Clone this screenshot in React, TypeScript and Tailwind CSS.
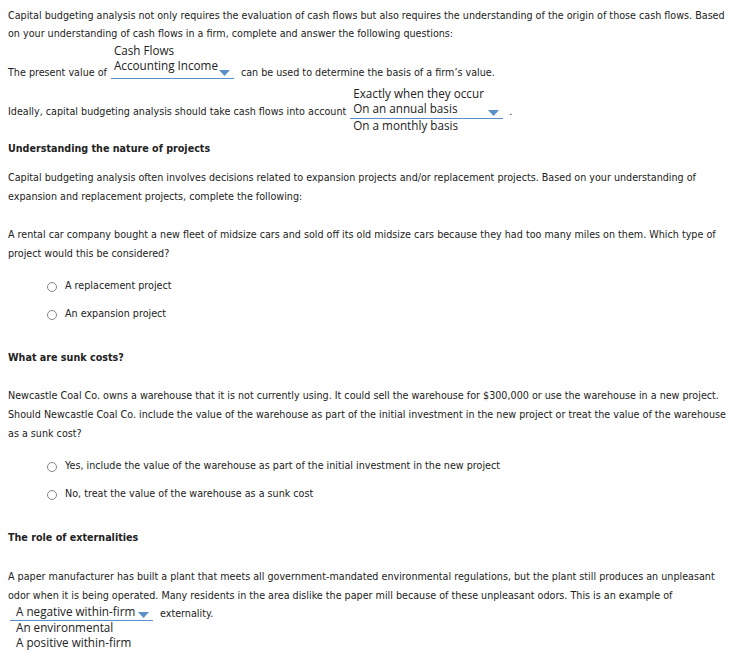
import React from 'react'

const body = "font-['DejaVu_Sans',Verdana,sans-serif] text-[9.6px] text-[#222]"
const opt = "font-['Open_Sans','Noto_Sans',sans-serif] text-[11.7px] text-[#222]"

function Caret() {
  return (
    <svg width="11" height="6" viewBox="0 0 11 6" className="shrink-0">
      <polygon points="0,0 11,0 5.5,6" fill="#5a8fc8" />
    </svg>
  )
}

interface DropdownProps {
  above?: string[]
  selected: string
  below?: string[]
  width: number
  padLeft?: string
  selClass?: string
  belowClass?: string
}

function Dropdown({ above = [], selected, below = [], width, padLeft = 'pl-[3px]', selClass = 'h-[21px]', belowClass = '' }: DropdownProps) {
  return (
    <div className={`flex flex-col ${opt}`} style={{ width }}>
      {above.map(o => (
        <div key={o} className={`h-[15px] leading-[15px] whitespace-nowrap ${padLeft}`}>{o}</div>
      ))}
      <div className={`flex items-start justify-between border-b border-[#5a8fc8] ${padLeft} pr-[4px] ${selClass}`}>
        <span className="leading-[15px] whitespace-nowrap">{selected}</span>
        <span className="self-end mb-[2px]"><Caret /></span>
      </div>
      {below.length > 0 && (
        <div className={`flex flex-col ${belowClass}`}>
          {below.map(o => (
            <div key={o} className={`h-[15px] leading-[15px] whitespace-nowrap ${padLeft}`}>{o}</div>
          ))}
        </div>
      )}
    </div>
  )
}

function Radio({ label }: { label: string }) {
  return (
    <div className="flex items-center h-[19px] pl-[39px]">
      <span className="w-[10px] h-[10px] rounded-full border border-[#858585] bg-white shrink-0" />
      <span className="ml-[8px]">{label}</span>
    </div>
  )
}

export default function App() {
  return (
    <div className={`w-[752px] h-[664px] bg-white pl-[8px] pr-[17px] overflow-hidden ${body}`}>
      <p className="leading-[18px] pt-[7px]">
        Capital budgeting analysis not only requires the evaluation of cash flows but also requires the understanding of the origin of those cash flows. Based on your understanding of cash flows in a firm, complete and answer the following questions:
      </p>

      <div className="flex items-start">
        <span className="mt-[20px] leading-[19px] whitespace-nowrap">The present value of</span>
        <div className="ml-[4px]">
          <Dropdown above={['Cash Flows']} selected="Accounting Income" width={123} selClass="h-[21px]" />
        </div>
        <span className="ml-[7px] mt-[20px] leading-[19px] whitespace-nowrap">can be used to determine the basis of a firm’s value.</span>
      </div>

      <div className="flex items-start">
        <span className="mt-[20px] leading-[19px] whitespace-nowrap">Ideally, capital budgeting analysis should take cash flows into account</span>
        <div className="ml-[4px] mt-[4px]">
          <Dropdown above={['Exactly when they occur']} selected="On an annual basis" below={['On a monthly basis']} width={153} selClass="h-[18px]" belowClass="-mt-[1px]" />
        </div>
        <span className="ml-[6px] mt-[20px] leading-[19px]">.</span>
      </div>

      <h3 className="font-bold leading-[19px] mt-[6px]">Understanding the nature of projects</h3>

      <p className="leading-[19px] mt-[10px]">
        Capital budgeting analysis often involves decisions related to expansion projects and/or replacement projects. Based on your understanding of expansion and replacement projects, complete the following:
      </p>

      <p className="leading-[19px] mt-[19px]">
        A rental car company bought a new fleet of midsize cars and sold off its old midsize cars because they had too many miles on them. Which type of project would this be considered?
      </p>

      <div className="mt-[14px] flex flex-col gap-[9px]">
        <Radio label="A replacement project" />
        <Radio label="An expansion project" />
      </div>

      <h3 className="font-bold leading-[19px] mt-[24px]">What are sunk costs?</h3>

      <p className="leading-[19px] mt-[19px]">
        Newcastle Coal Co. owns a warehouse that it is not currently using. It could sell the warehouse for $300,000 or use the warehouse in a new project. Should Newcastle Coal Co. include the value of the warehouse as part of the initial investment in the new project or treat the value of the warehouse as a sunk cost?
      </p>

      <div className="mt-[14px] flex flex-col gap-[9px]">
        <Radio label="Yes, include the value of the warehouse as part of the initial investment in the new project" />
        <Radio label="No, treat the value of the warehouse as a sunk cost" />
      </div>

      <h3 className="font-bold leading-[19px] mt-[24px]">The role of externalities</h3>

      <p className="leading-[19px] mt-[20px]">
        A paper manufacturer has built a plant that meets all government-mandated environmental regulations, but the plant still produces an unpleasant odor when it is being operated. Many residents in the area dislike the paper mill because of these unpleasant odors. This is an example of
      </p>

      <div className="flex items-start">
        <div className="ml-[2px] mt-[-1px]">
          <Dropdown selected="A negative within-firm" below={['An environmental', 'A positive within-firm']} width={143} padLeft="pl-[6px]" selClass="h-[17px]" belowClass="-mt-[1px]" />
        </div>
        <span className="ml-[7px] mt-[-1px] leading-[19px]">externality.</span>
      </div>
    </div>
  )
}
